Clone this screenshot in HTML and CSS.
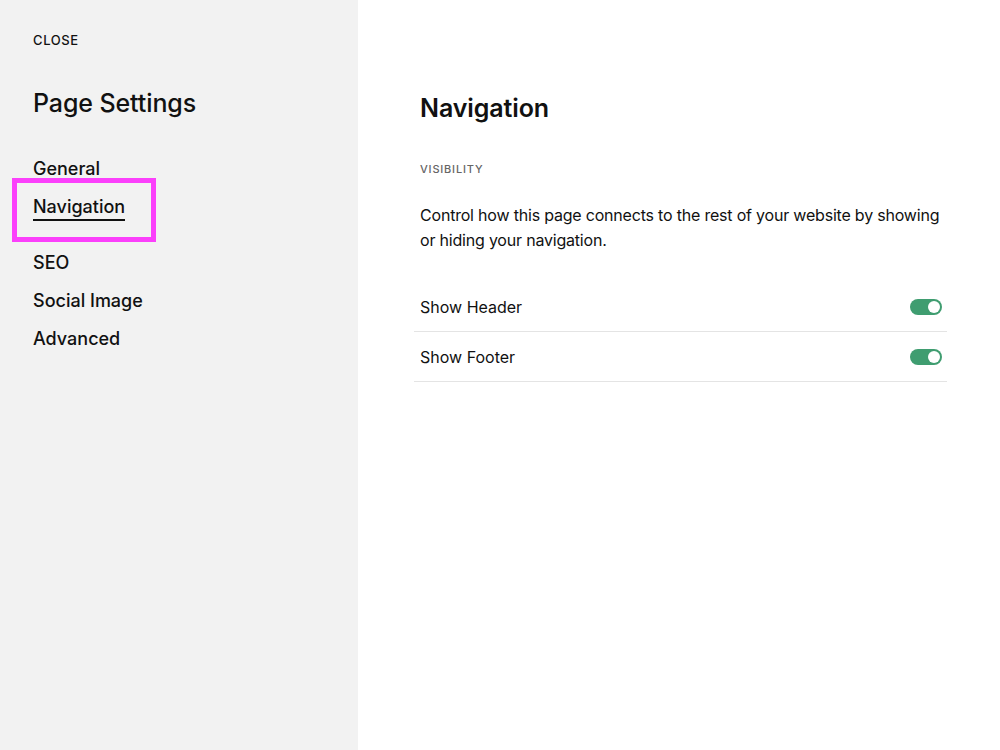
FILE: index.html
```html
<!DOCTYPE html>
<html lang="en">
<head>
<meta charset="utf-8">
<title>Page Settings</title>
<link rel="stylesheet" href="styles.css">
</head>
<body>
<div class="app">
  <aside class="sidebar">
    <div class="close">CLOSE</div>
    <h1 class="side-title">Page Settings</h1>
    <nav class="side-nav">
      <a class="nav-item">General</a>
      <div class="nav-active-wrap">
        <a class="nav-item active">Navigation</a>
        <span class="highlight"></span>
      </div>
      <a class="nav-item">SEO</a>
      <a class="nav-item">Social Image</a>
      <a class="nav-item">Advanced</a>
    </nav>
  </aside>
  <main class="main">
    <h2 class="main-title">Navigation</h2>
    <div class="section-label">VISIBILITY</div>
    <p class="desc">Control how this page connects to the rest of your website by showing or hiding your navigation.</p>
    <div class="rows">
      <div class="row">
        <span class="row-label">Show Header</span>
        <span class="toggle on"><span class="knob"></span></span>
      </div>
      <div class="row">
        <span class="row-label">Show Footer</span>
        <span class="toggle on"><span class="knob"></span></span>
      </div>
    </div>
  </main>
</div>
</body>
</html>
```

FILE: styles.css
```css
* { box-sizing: border-box; }
html, body { margin: 0; padding: 0; height: 100%; }
body {
  font-family: "Inter", "Liberation Sans", sans-serif;
  color: #111;
  background: #fff;
}
.app {
  display: flex;
  height: 750px;
}
.sidebar {
  width: 358px;
  flex: none;
  background: #f2f2f2;
  padding: 32px 0 0 33px;
  display: flex;
  flex-direction: column;
}
.close {
  font-size: 13px;
  line-height: 16px;
  font-weight: 500;
  letter-spacing: 0.6px;
}
.side-title {
  margin: 40px 0 0 0;
  font-size: 25px;
  line-height: 30px;
  font-weight: 500;
  letter-spacing: -0.1px;
}
.side-nav {
  margin-top: 32px;
  display: flex;
  flex-direction: column;
}
.nav-item {
  display: block;
  font-size: 18px;
  line-height: 24px;
  font-weight: 500;
  padding: 7px 0;
  color: #111;
}
.nav-active-wrap {
  position: relative;
  padding-bottom: 23px;
}
.nav-item.active {
  display: inline-block;
  padding-bottom: 0;
  border-bottom: 2px solid #111;
}
.highlight {
  position: absolute;
  left: -21px;
  top: -10px;
  width: 144px;
  height: 64px;
  border: 5px solid #fb40fb;
}
.main {
  flex: 1;
  padding: 93px 53px 0 56px;
}
.main-title {
  margin: 0 0 0 6px;
  font-size: 25px;
  line-height: 30px;
  font-weight: 600;
  letter-spacing: -0.1px;
}
.section-label {
  margin: 39px 0 0 6px;
  font-size: 11px;
  line-height: 14px;
  font-weight: 500;
  letter-spacing: 0.8px;
  color: #666;
}
.desc {
  margin: 27px 0 0 6px;
  font-size: 16px;
  line-height: 25px;
  letter-spacing: -0.2px;
  max-width: 527px;
}
.rows {
  margin-top: 29px;
}
.row {
  display: flex;
  align-items: center;
  justify-content: space-between;
  height: 50px;
  padding: 0 5px 0 6px;
  border-bottom: 1px solid #e4e4e4;
  font-size: 16px;
}
.toggle {
  width: 32px;
  height: 16px;
  border-radius: 8px;
  background: #3f9d70;
  position: relative;
  flex: none;
}
.knob {
  position: absolute;
  right: 2px;
  top: 2px;
  width: 12px;
  height: 12px;
  border-radius: 50%;
  background: #fff;
}
```
